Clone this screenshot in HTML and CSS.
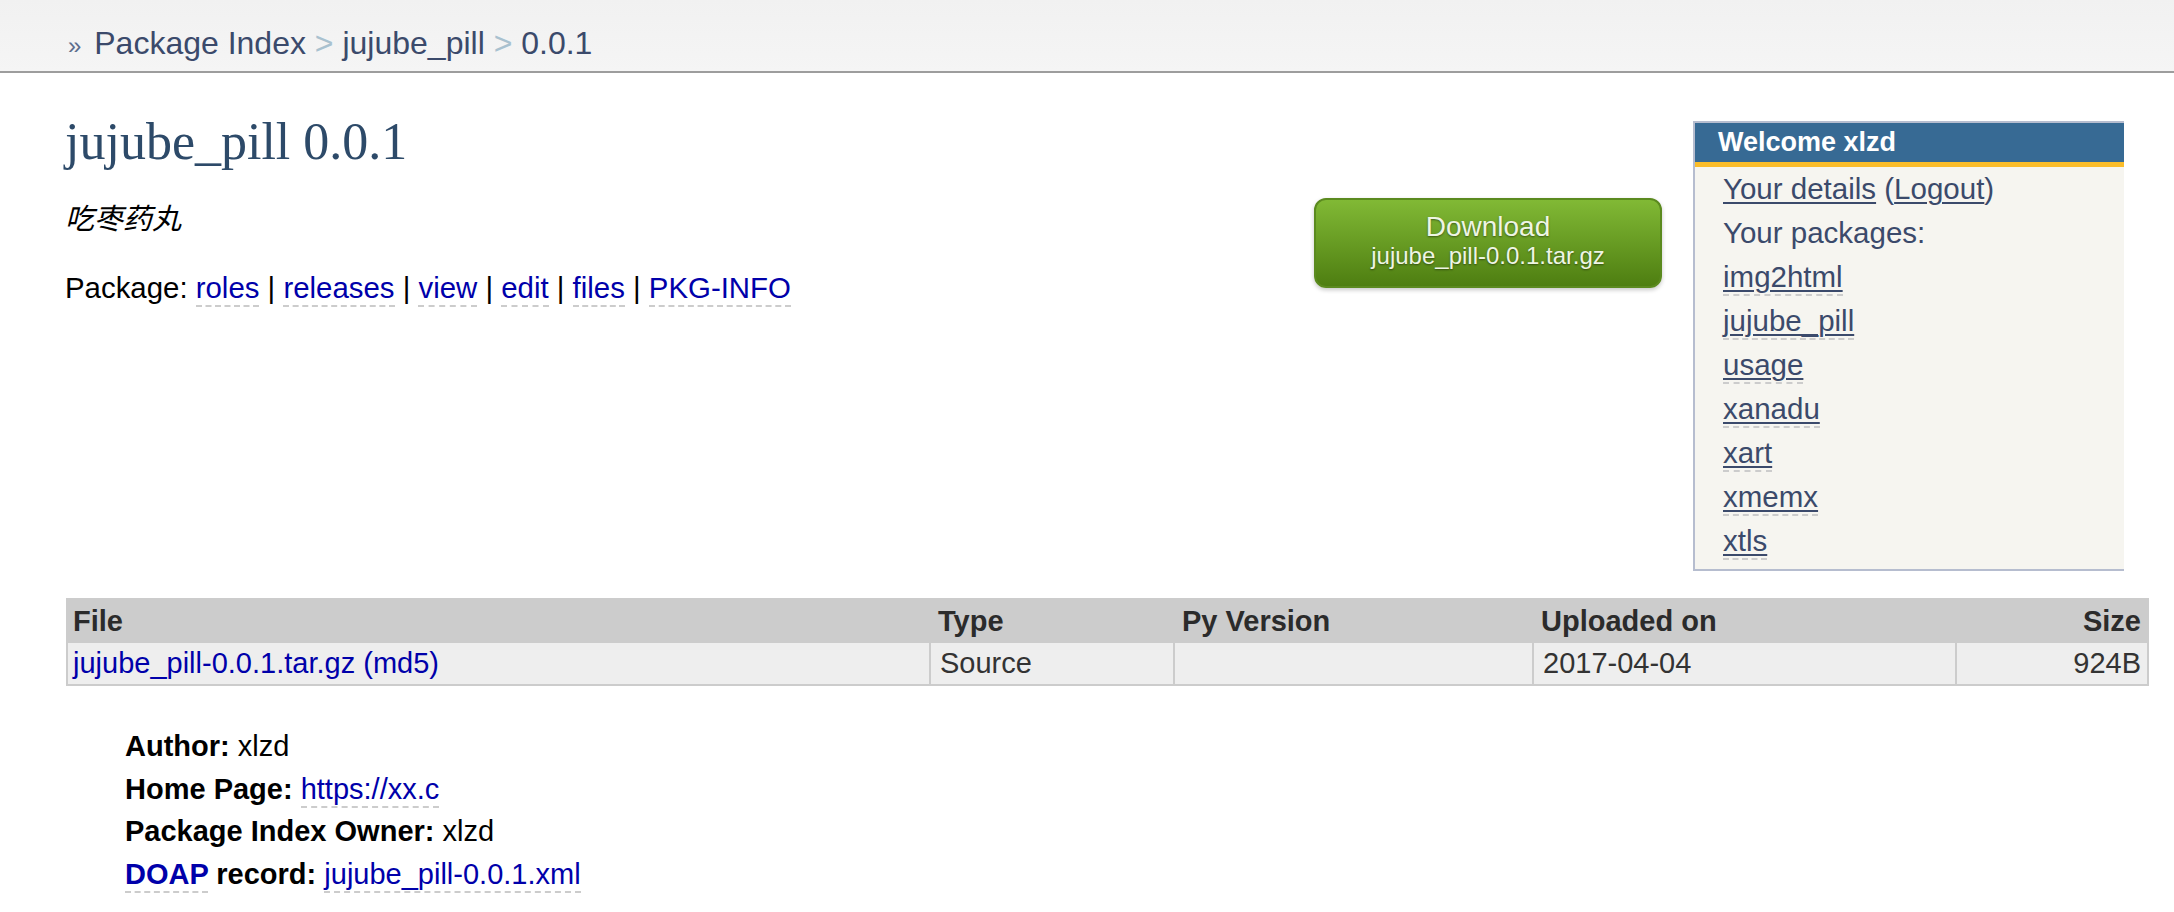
FILE: index.html
```html
<!DOCTYPE html>
<html lang="en">
<head>
<meta charset="utf-8">
<title>jujube_pill 0.0.1</title>
<link rel="stylesheet" href="styles.css">
</head>
<body>
<div class="topbar">
  <span class="raquo">»</span> <a class="crumb" href="#">Package Index</a> <span class="sep">&gt;</span> <a class="crumb" href="#">jujube_pill</a> <span class="sep">&gt;</span> <span class="crumb">0.0.1</span>
</div>
<div class="page">
  <div class="toprow">
    <div class="content">
      <h1 class="title">jujube_pill 0.0.1</h1>
      <p class="summary">吃枣药丸</p>
      <p class="pkglinks">Package: <a href="#">roles</a> | <a href="#">releases</a> | <a href="#">view</a> | <a href="#">edit</a> | <a href="#">files</a> | <a href="#">PKG-INFO</a></p>
    </div>
    <a class="download" href="#">
      <span class="dl-main">Download</span>
      <span class="dl-file">jujube_pill-0.0.1.tar.gz</span>
    </a>
    <div class="sidebar">
      <div class="sidebar-head">Welcome xlzd</div>
      <div class="sidebar-body">
        <div><a class="plain" href="#">Your details</a> (<a class="plain" href="#">Logout</a>)</div>
        <div>Your packages:</div>
        <div><a class="pkg" href="#">img2html</a></div>
        <div><a class="pkg" href="#">jujube_pill</a></div>
        <div><a class="pkg" href="#">usage</a></div>
        <div><a class="pkg" href="#">xanadu</a></div>
        <div><a class="pkg" href="#">xart</a></div>
        <div><a class="pkg" href="#">xmemx</a></div>
        <div><a class="pkg" href="#">xtls</a></div>
      </div>
    </div>
  </div>
  <table class="files">
    <colgroup>
      <col class="c-file"><col class="c-type"><col class="c-py"><col class="c-date"><col class="c-size">
    </colgroup>
    <thead>
      <tr><th>File</th><th>Type</th><th>Py Version</th><th>Uploaded on</th><th class="num">Size</th></tr>
    </thead>
    <tbody>
      <tr><td><a href="#">jujube_pill-0.0.1.tar.gz</a> <span class="md5">(<a href="#">md5</a>)</span></td><td>Source</td><td></td><td>2017-04-04</td><td class="num">924B</td></tr>
    </tbody>
  </table>
  <ul class="meta">
    <li><strong>Author:</strong> xlzd</li>
    <li><strong>Home Page:</strong> <a href="#">https://xx.c</a></li>
    <li><strong>Package Index Owner:</strong> xlzd</li>
    <li><strong><a href="#">DOAP</a> record:</strong> <a href="#">jujube_pill-0.0.1.xml</a></li>
  </ul>
</div>
</body>
</html>
```

FILE: styles.css
```css
body {
  margin: 0;
  font-family: "Liberation Sans", Arial, "Noto Sans CJK SC", sans-serif;
  font-size: 29px;
  color: #000;
  background: #fff;
}

.topbar {
  height: 73px;
  box-sizing: border-box;
  padding: 21px 0 0 68px;
  font-size: 32px;
  line-height: 44px;
  background: linear-gradient(#f1f1f1, #f5f5f5);
  border-bottom: 2px solid #9d9d9d;
  color: #3b4a6b;
}
.raquo {
  display: inline-block;
  font-size: 24px;
  margin-right: 4px;
  color: #5d6d8c;
}
.sep { color: #a9c1cf; }
.crumb { color: #3b4a6b; text-decoration: none; }

.page {
  padding: 0 25px 0 65px;
}

.toprow {
  display: flex;
  align-items: flex-start;
}

.content { flex: 1; }

.title {
  margin: 40px 0 0;
  font-family: "Liberation Serif", "DejaVu Serif", serif;
  font-weight: normal;
  font-size: 52px;
  line-height: 57px;
  color: #2d4a69;
}

.summary {
  margin: 27px 0 0;
  line-height: 44px;
  font-style: italic;
  font-family: "Liberation Sans", "Noto Sans CJK SC", sans-serif;
}

.pkglinks {
  margin: 25px 0 0;
  font-size: 29.4px;
  line-height: 44px;
}

a {
  color: #0000aa;
  text-decoration: none;
}
.pkglinks a,
.meta a {
  border-bottom: 2px dashed #cccccc;
  padding-bottom: 1px;
}

.download {
  display: block;
  margin: 125px 31px 0 0;
  width: 348px;
  height: 90px;
  box-sizing: border-box;
  padding-top: 12px;
  text-align: center;
  color: #eef5e4;
  border: 2px solid #5b8a1f;
  border-radius: 12px;
  background: linear-gradient(#81b935, #4e7e11);
  box-shadow: 0 2px 4px rgba(0, 0, 0, 0.22);
  text-shadow: 0 1px 2px rgba(0, 0, 0, 0.45);
}
.dl-main { display: block; font-size: 28px; line-height: 30px; }
.dl-file { display: block; font-size: 24px; line-height: 28px; }

.sidebar {
  margin: 48px 25px 0 0;
  width: 431px;
  box-sizing: border-box;
  background: #f6f5f0;
  border: 2px solid #b6bdcf;
  border-right: 0;
}
.sidebar-head {
  background: #376a94;
  color: #fff;
  font-weight: bold;
  font-size: 27px;
  line-height: 39px;
  padding-left: 23px;
  border-bottom: 5px solid #fbbd2a;
}
.sidebar-body {
  padding: 0 0 6px 28px;
  font-size: 29.5px;
  line-height: 44px;
  color: #3b4a6b;
}
.sidebar-body a {
  color: #3b4a6b;
  text-decoration: underline;
  text-decoration-thickness: 2px;
  text-underline-offset: 3px;
}
.sidebar-body a.pkg {
  border-bottom: 2px dashed #cccccc;
  padding-bottom: 1px;
}

.files {
  margin-top: 27px;
  width: 2083px;
  margin-left: 1px;
  table-layout: fixed;
  border-collapse: separate;
  border-spacing: 0;
  border: 2px solid #cccccc;
  color: #333;
}
.c-file { width: 861px; }
.c-type { width: 244px; }
.c-py { width: 359px; }
.c-date { width: 423px; }
.c-size { width: 192px; }

.files th,
.files td {
  padding: 0 6px 0 9px;
}
.files th:first-child,
.files td:first-child {
  padding-left: 5px;
}
.files th {
  background: #cccccc;
  text-align: left;
  font-weight: bold;
  line-height: 43px;
  color: #2b2b2b;
}
.files td {
  background: #eeeeee;
  line-height: 41px;
  border-left: 2px solid #cccccc;
  white-space: nowrap;
}
.files td:first-child { border-left: 0; }
.files .num { text-align: right; }
.md5 { color: #0000aa; }

.meta {
  list-style: none;
  margin: 39px 0 0 60px;
  padding: 0;
}
.meta li { line-height: 42.5px; }
```
